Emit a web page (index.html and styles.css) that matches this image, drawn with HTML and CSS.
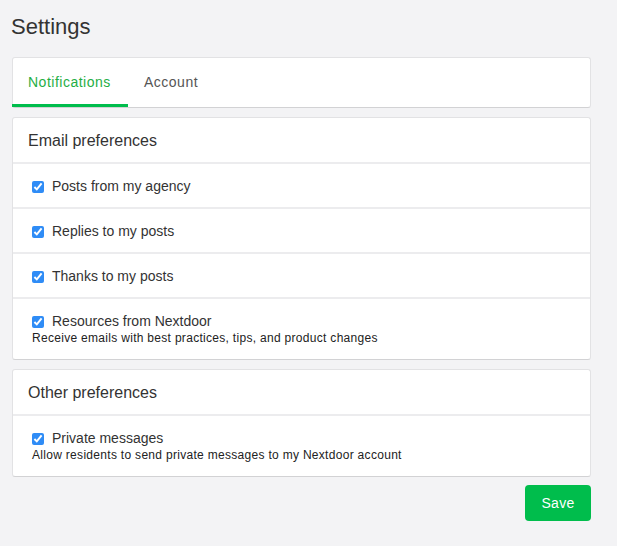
FILE: index.html
```html
<!DOCTYPE html>
<html lang="en">
<head>
  <meta charset="UTF-8" />
  <title>Settings</title>
  <link rel="stylesheet" href="styles.css">
</head>
<body>
  <div class="page">
    <h1 class="page-title">Settings</h1>

    <div class="card tabs">
      <div class="tab active">Notifications</div>
      <div class="tab">Account</div>
    </div>

    <div class="card">
      <div class="card-header">Email preferences</div>
      <label class="pref-row">
        <span class="pref-main"><input type="checkbox" checked> Posts from my agency</span>
      </label>
      <label class="pref-row">
        <span class="pref-main"><input type="checkbox" checked> Replies to my posts</span>
      </label>
      <label class="pref-row">
        <span class="pref-main"><input type="checkbox" checked> Thanks to my posts</span>
      </label>
      <label class="pref-row">
        <span class="pref-main"><input type="checkbox" checked> Resources from Nextdoor</span>
        <span class="pref-desc">Receive emails with best practices, tips, and product changes</span>
      </label>
    </div>

    <div class="card">
      <div class="card-header">Other preferences</div>
      <label class="pref-row">
        <span class="pref-main"><input type="checkbox" checked> Private messages</span>
        <span class="pref-desc">Allow residents to send private messages to my Nextdoor account</span>
      </label>
    </div>

    <div class="actions">
      <button class="btn-save">Save</button>
    </div>
  </div>
</body>
</html>
```

FILE: styles.css
```css
body {
  margin: 0;
  background-color: #f3f3f5;
  font-family: 'Liberation Sans', Arial, sans-serif;
  color: #333;
}

.page {
  width: 579px;
  padding: 13px 0 0 12px;
}

.page-title {
  margin: 0 0 16px;
  font-size: 22px;
  font-weight: normal;
  line-height: 28px;
  color: #333;
  margin-left: -1px;
}

.card {
  background-color: #fff;
  border: 1px solid #e2e2e4;
  border-bottom-color: #d2d2d4;
  border-radius: 3px;
  margin-bottom: 9px;
}

.tabs {
  display: flex;
  height: 49px;
}

.tab {
  padding: 0 16px;
  font-size: 14px;
  line-height: 49px;
  letter-spacing: 0.5px;
  color: #555;
  box-sizing: border-box;
}

.tab.active {
  color: #1fae45;
  border-bottom: 3px solid #00bd4c;
  line-height: 49px;
  height: 49px;
  width: 116px;
  margin-left: -1px;
}

.card-header {
  padding: 1px 15px 0;
  height: 43px;
  line-height: 43px;
  font-size: 16px;
  color: #333;
  border-bottom: 2px solid #ececee;
}

.pref-row {
  display: flex;
  flex-direction: column;
  padding: 13px 19px 11px;
  border-bottom: 2px solid #ececee;
}

.pref-row:last-child {
  border-bottom: none;
}

.pref-main {
  display: flex;
  align-items: center;
  font-size: 14px;
  line-height: 19px;
  color: #333;
}

.pref-main input {
  width: 12px;
  height: 12px;
  margin: 0 8px 0 0;
  accent-color: #2f8cf6;
}

.pref-desc {
  font-size: 12px;
  line-height: 16px;
  letter-spacing: 0.3px;
  color: #222;
  margin-top: -1px;
  margin-bottom: 2px;
}

.actions {
  display: flex;
  justify-content: flex-end;
  margin-top: -1px;
}

.btn-save {
  width: 66px;
  height: 36px;
  background-color: #00bd4c;
  color: #fff;
  border: none;
  border-radius: 4px;
  font-family: inherit;
  font-size: 14px;
  letter-spacing: 0.3px;
  cursor: pointer;
}
```
